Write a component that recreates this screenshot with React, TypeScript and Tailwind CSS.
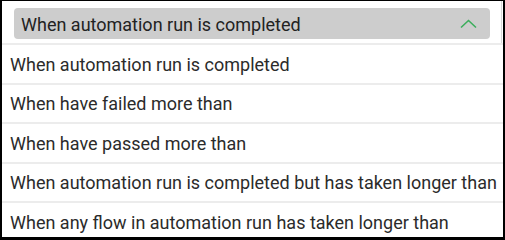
import React from "react";

const items = [
  "When automation run is completed",
  "When have failed more than",
  "When have passed more than",
  "When automation run is completed but has taken longer than",
  "When any flow in automation run has taken longer than",
];

export default function App() {
  return (
    <div
      className="w-[505px] h-[240px] bg-white border-black border-l-2 border-r-2 border-t border-b-[3px] flex flex-col overflow-hidden"
      style={{ fontFamily: "Roboto, 'Noto Sans', sans-serif" }}
    >
      <div className="h-[42px] shrink-0 pl-[12px] pr-[11px] pt-[7px] border-r border-[#d8d8d8] mr-[1px]">
        <div className="h-[31px] rounded-[4px] bg-[#cdcdcd] flex items-center justify-between pl-[7px] pr-[13px]">
          <span className="text-[18px] leading-none text-[#222222] pt-[2px]">
            When automation run is completed
          </span>
          <svg width="17" height="10" viewBox="0 0 17 10" fill="none">
            <path d="M1 8.5L8.5 1.5L16 8.5" stroke="#3cae5c" strokeWidth="1.6" />
          </svg>
        </div>
      </div>
      <div className="flex flex-col">
        {items.map((t) => (
          <div
            key={t}
            className="h-[39.5px] border-t-2 border-[#ececec] flex items-center pl-[8px] pt-[2px] text-[18px] leading-none text-[#2b2b2b]"
          >
            {t}
          </div>
        ))}
      </div>
    </div>
  );
}
